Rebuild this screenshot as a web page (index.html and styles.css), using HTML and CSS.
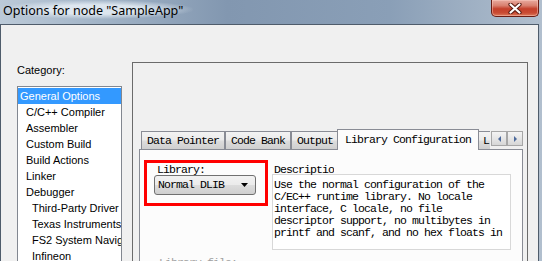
FILE: index.html
```html
<!DOCTYPE html>
<html lang="en">
<head>
    <meta charset="UTF-8">
    <title>Options for node "SampleApp"</title>
    <link rel="stylesheet" href="styles.css">
</head>
<body>
    <div class="window">
        <div class="titlebar">
            <span class="title">Options for node "SampleApp"</span>
            <div class="close">
                <svg width="14" height="11" viewBox="0 0 14 11">
                    <path d="M2.5 1.5 L11.5 9.5 M11.5 1.5 L2.5 9.5" stroke="#5a1c12" stroke-width="4.2" stroke-linecap="round"/>
                    <path d="M2.5 1.5 L11.5 9.5 M11.5 1.5 L2.5 9.5" stroke="#ffffff" stroke-width="2.2" stroke-linecap="round"/>
                </svg>
            </div>
        </div>

        <div class="client">
            <div class="category">
                <div class="cat-label">Category:</div>
                <ul class="cat-list">
                    <li class="selected">General Options</li>
                    <li class="lvl1">C/C++ Compiler</li>
                    <li class="lvl1">Assembler</li>
                    <li class="lvl1">Custom Build</li>
                    <li class="lvl1">Build Actions</li>
                    <li class="lvl1">Linker</li>
                    <li class="lvl1">Debugger</li>
                    <li class="lvl2">Third-Party Driver</li>
                    <li class="lvl2">Texas Instruments</li>
                    <li class="lvl2">FS2 System Navigator</li>
                    <li class="lvl2">Infineon</li>
                </ul>
            </div>

            <div class="options">
                <div class="tab-row mono">
                    <div class="tab">Data Pointer</div>
                    <div class="tab">Code Bank</div>
                    <div class="tab">Output</div>
                    <div class="tab active">Library Configuration</div>
                    <div class="tab cut">L</div>
                    <div class="tab-scroll">
                        <span class="scroll-btn"><i class="arrow left"></i></span>
                        <span class="scroll-btn"><i class="arrow right"></i></span>
                    </div>
                </div>

                <div class="page mono">
                    <div class="page-row">
                        <div class="lib-box">
                            <div class="field-label">Library:</div>
                            <div class="combo">
                                <span>Normal DLIB</span>
                                <svg width="7" height="4" viewBox="0 0 7 4"><path d="M0 0 H7 L3.5 4 Z" fill="#000"/></svg>
                            </div>
                        </div>
                        <div class="desc">
                            <div class="desc-label">Descriptio</div>
                            <div class="desc-text">Use the normal configuration of the<br>C/EC++ runtime library. No locale<br>interface, C locale, no file<br>descriptor support, no multibytes in<br>printf and scanf, and no hex floats in</div>
                        </div>
                    </div>
                    <div class="dim-label">Library file:</div>
                </div>
            </div>
        </div>
    </div>
</body>
</html>
```

FILE: styles.css
```css
* { margin: 0; padding: 0; box-sizing: border-box; }
body {
    width: 542px;
    height: 261px;
    overflow: hidden;
    font-family: "Liberation Sans", Arial, sans-serif;
    font-size: 11px;
    color: #000;
}
.mono {
    font-family: "Liberation Mono", "Courier New", monospace;
    font-size: 11.5px;
    letter-spacing: -0.9px;
}
.window {
    height: 261px;
    background: linear-gradient(90deg, #bccad8 0%, #a2b4c7 18%, #8297b0 42%, #8a9fb7 72%, #b1bfce 100%);
}
.titlebar {
    height: 24px;
    display: flex;
    justify-content: space-between;
    align-items: flex-start;
    padding-right: 3px;
}
.title {
    font-family: "Noto Sans", "Open Sans", sans-serif;
    font-size: 12.5px;
    line-height: 17px;
    padding: 2px 10px 0 3px;
    color: #000;
    background: radial-gradient(ellipse at center, rgba(235, 242, 248, 0.8) 35%, rgba(235, 242, 248, 0) 72%);
}
.close {
    width: 48px;
    height: 17px;
    border: 1px solid #6a1d14;
    border-top: none;
    border-radius: 0 0 5px 5px;
    background: linear-gradient(180deg, #e8ab9f 0%, #d9806f 35%, #c4402b 55%, #c94b33 80%, #dc7a5c 100%);
    box-shadow: inset 0 0 0 1px rgba(255, 210, 200, 0.45);
    display: flex;
    align-items: center;
    justify-content: center;
}
.client {
    height: 237px;
    margin-right: 3px;
    border: 1px solid #4f5c6b;
    border-bottom: none;
    background: #f0f0f0;
    display: flex;
    overflow: hidden;
}
.category {
    width: 121px;
    flex-shrink: 0;
    padding: 39px 0 0 16px;
}
.cat-label {
    line-height: 13px;
    margin-bottom: 9px;
}
.cat-list {
    list-style: none;
    width: 105px;
    height: 200px;
    border: 1px solid #828790;
    background: #ffffff;
    padding-top: 1px;
    overflow: hidden;
}
.cat-list li {
    height: 16px;
    line-height: 16px;
    padding-left: 2px;
    white-space: nowrap;
    overflow: hidden;
}
.cat-list li.selected {
    background: #3399ff;
    color: #ffffff;
}
.cat-list li.lvl1 { padding-left: 8px; }
.cat-list li.lvl2 { padding-left: 14px; }
.options {
    width: 396px;
    height: 220px;
    flex-shrink: 0;
    margin: 37px 0 0 10px;
    border: 1px solid #6b6b6b;
    padding: 66px 4px 0 6px;
}
.tab-row {
    height: 20px;
    display: flex;
    align-items: flex-end;
    padding-left: 2px;
}
.tab {
    height: 18px;
    line-height: 18px;
    padding: 0 5px;
    border: 1px solid #898c95;
    border-bottom: none;
    background: linear-gradient(180deg, #f3f3f3 0%, #ebebeb 45%, #dcdcdc 55%, #cfcfcf 100%);
    white-space: nowrap;
    flex-shrink: 0;
}
.tab.active {
    position: relative;
    z-index: 1;
    height: 21px;
    margin: 0 -2px -1px;
    padding: 0 7px;
    line-height: 19px;
    background: #fcfcfc;
}
.tab.cut {
    width: 13px;
    overflow: hidden;
    border-right: none;
    margin-right: 1px;
}
.tab-scroll {
    display: flex;
    align-self: flex-start;
    margin-top: 2px;
}
.scroll-btn {
    width: 16px;
    height: 15px;
    border: 1px solid #a7a7a7;
    background: linear-gradient(180deg, #f4f4f4 0%, #e6e6e6 50%, #d6d6d6 100%);
    display: flex;
    align-items: center;
    justify-content: center;
}
.arrow {
    width: 0;
    height: 0;
    border-top: 3px solid transparent;
    border-bottom: 3px solid transparent;
}
.arrow.left { border-right: 3px solid #4d6a9c; }
.arrow.right { border-left: 3px solid #4d6a9c; }
.page {
    height: 140px;
    border: 1px solid #898c95;
    background: #fcfcfc;
    padding: 10px 0 0 4px;
}
.page-row {
    display: flex;
    align-items: flex-start;
}
.lib-box {
    width: 124px;
    height: 46px;
    border: 3px solid #ff0000;
    flex-shrink: 0;
}
.field-label {
    line-height: 11px;
    margin: 1px 0 0 10px;
}
.combo {
    width: 102px;
    height: 20px;
    margin-left: 7px;
    border: 1px solid #707070;
    border-radius: 3px;
    background: linear-gradient(180deg, #f2f2f2 0%, #ebebeb 50%, #dddddd 50%, #cfcfcf 100%);
    padding: 0 7px 0 3px;
    line-height: 18px;
    display: flex;
    align-items: center;
    justify-content: space-between;
}
.desc {
    margin-left: 4px;
}
.desc-label {
    width: 60px;
    line-height: 11px;
    margin: 4px 0 -1px 2px;
    white-space: nowrap;
    overflow: hidden;
}
.desc-text {
    width: 239px;
    height: 76px;
    border: 1px solid #d8d8d8;
    background: #ffffff;
    padding: 4px 1px 0;
    line-height: 12px;
    white-space: nowrap;
    overflow: hidden;
}
.dim-label {
    margin: 7px 0 0 15px;
    line-height: 11px;
    color: #a0a0a0;
}
```
